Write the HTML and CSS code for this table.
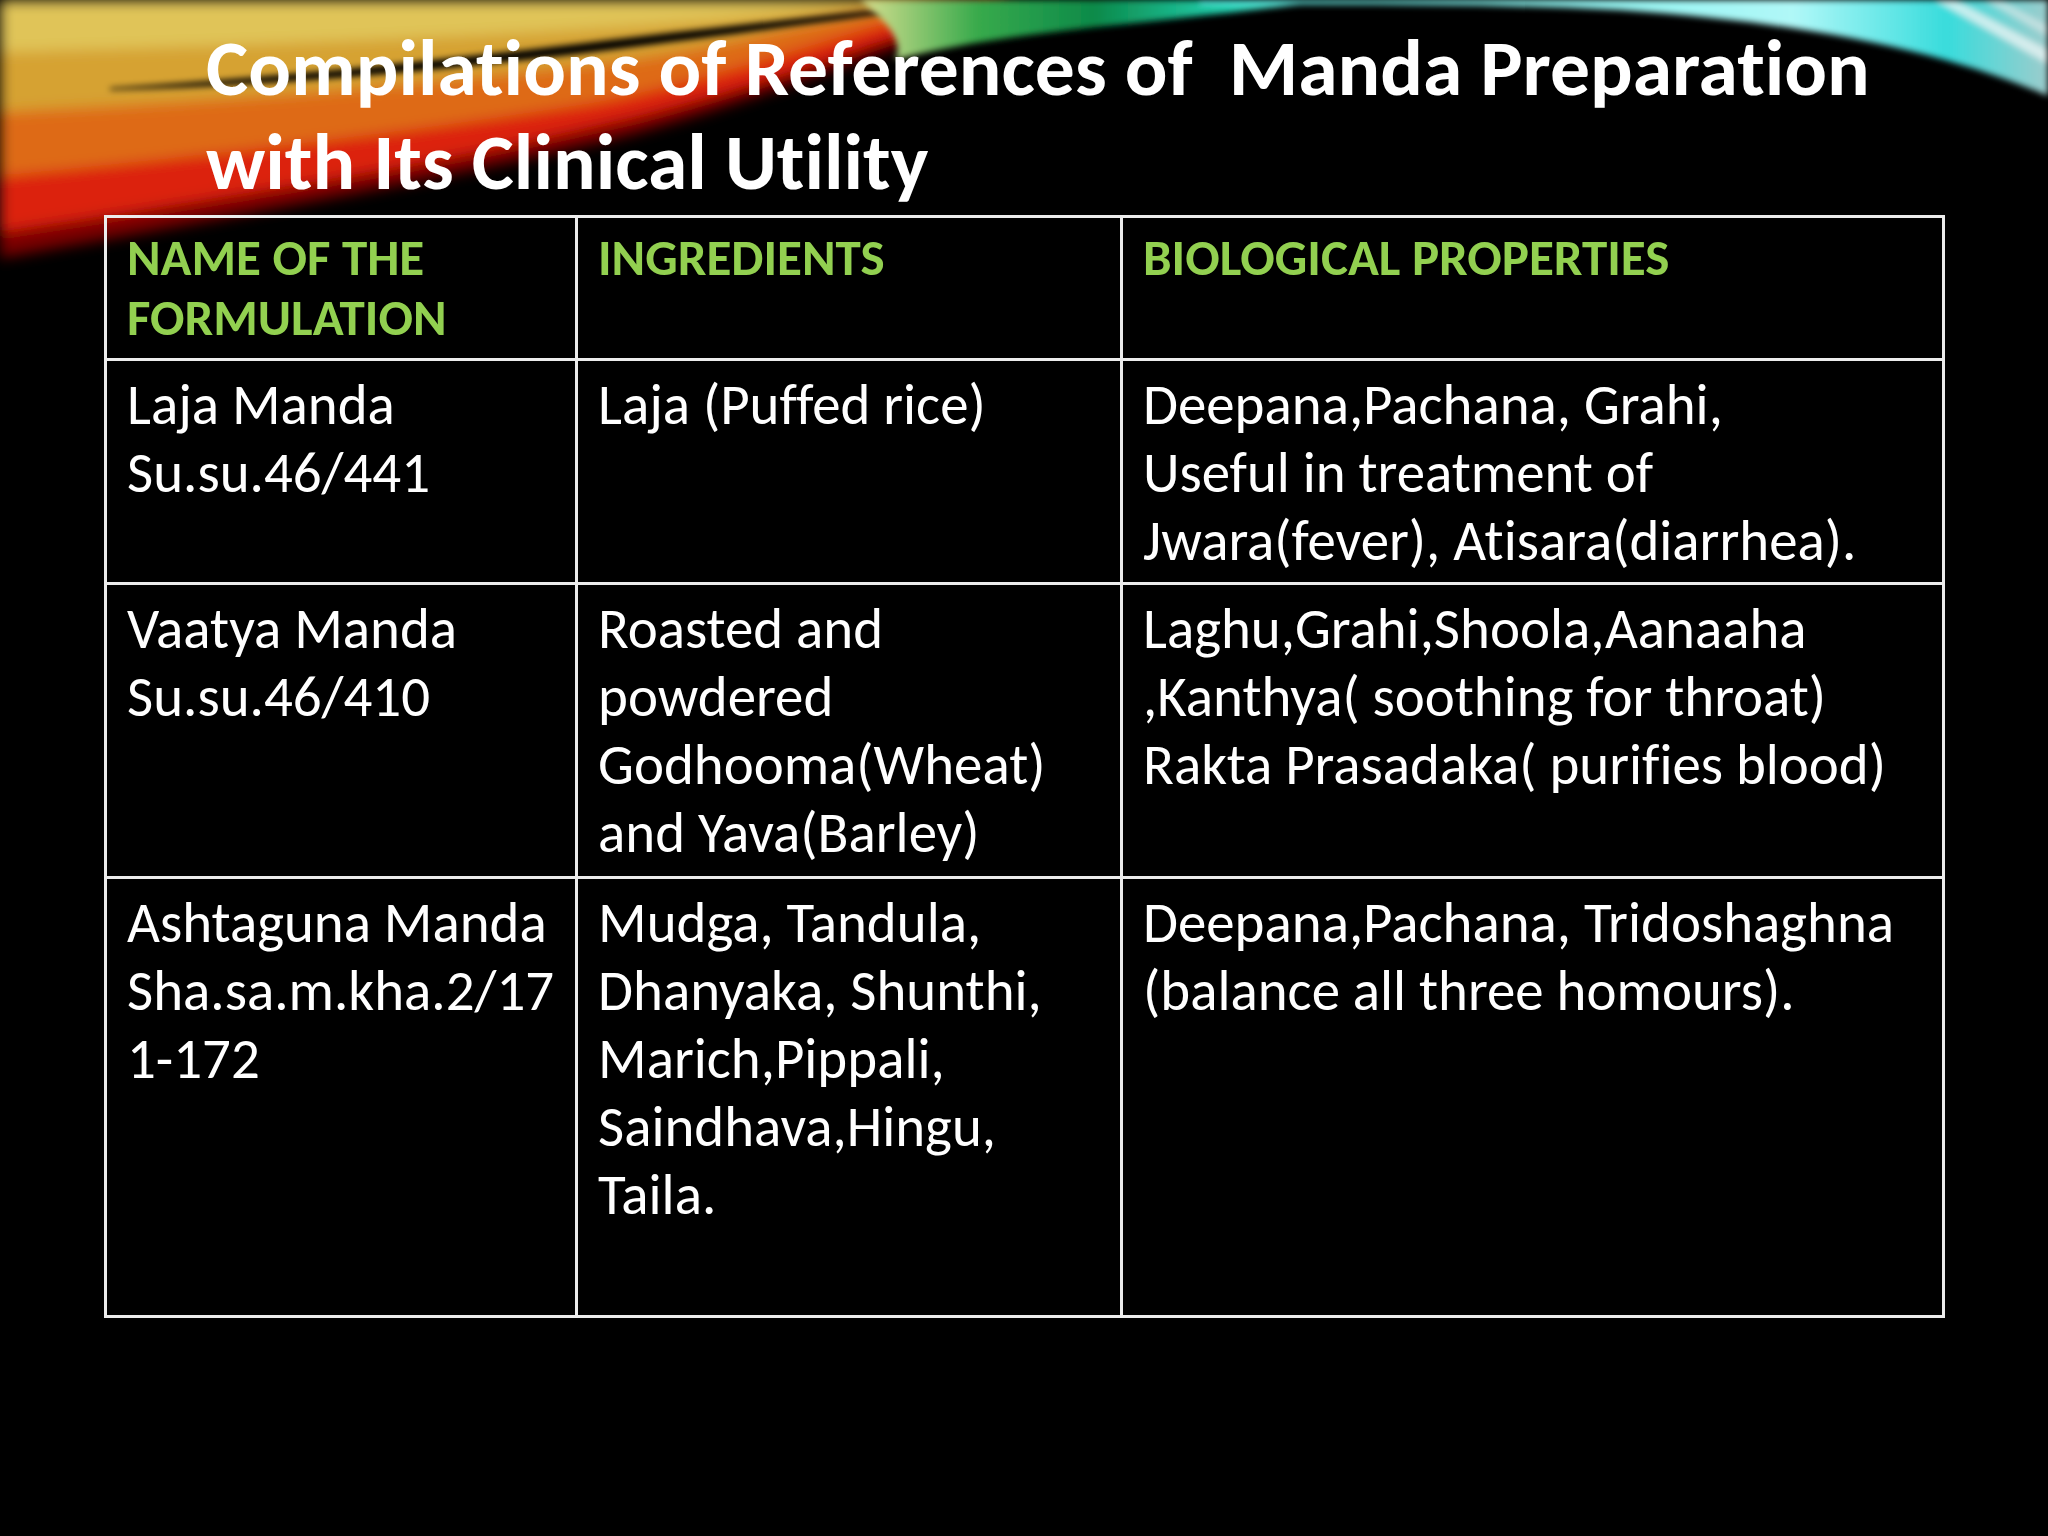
FILE: index.html
```html
<!DOCTYPE html>
<html lang="en">
<head>
<meta charset="utf-8">
<title>Manda Preparation</title>
<link rel="stylesheet" href="styles.css">
</head>
<body>
<div class="slide">
  <svg class="swoosh" viewBox="0 0 2048 320" width="2048" height="320" aria-hidden="true">
    <defs>
      <filter id="soft" x="-10%" y="-40%" width="120%" height="180%"><feGaussianBlur stdDeviation="7"/></filter>
      <filter id="soft2" x="-10%" y="-60%" width="120%" height="220%"><feGaussianBlur stdDeviation="3"/></filter>
      <linearGradient id="green" gradientUnits="userSpaceOnUse" x1="860" y1="0" x2="1330" y2="0">
        <stop offset="0" stop-color="#d8e090"/>
        <stop offset="0.25" stop-color="#38aa4c"/>
        <stop offset="0.5" stop-color="#0c8a4a"/>
        <stop offset="0.78" stop-color="#22d0b0"/>
        <stop offset="1" stop-color="#78f2ea"/>
      </linearGradient>
      <linearGradient id="cyan" gradientUnits="userSpaceOnUse" x1="1200" y1="0" x2="2048" y2="0">
        <stop offset="0" stop-color="#50e4dc"/>
        <stop offset="0.4" stop-color="#8af2ee"/>
        <stop offset="0.7" stop-color="#b0f8f8"/>
        <stop offset="0.88" stop-color="#38dcdc"/>
        <stop offset="1" stop-color="#9ccccc"/>
      </linearGradient>
    </defs>
    <g filter="url(#soft)">
      <path d="M0,0 L1020,0 C970,20 930,35 890,50 C790,85 690,120 610,140 C460,175 300,205 0,258 Z" fill="#7a0404"/>
      <path d="M0,0 L1010,0 C960,18 910,32 870,45 C770,80 670,110 600,125 C450,160 290,188 0,232 Z" fill="#dc2208"/>
      <path d="M0,0 L970,0 C910,15 870,28 830,40 C750,65 670,88 600,102 C440,128 280,148 0,176 Z" fill="#de6a14"/>
      <path d="M0,0 L930,0 C880,10 840,18 800,26 C730,42 670,55 610,62 C440,82 280,98 0,112 Z" fill="#d6a232"/>
      <path d="M0,0 L900,0 C840,8 780,14 720,20 C570,32 360,42 0,52 Z" fill="#e0c458"/>
    </g>
    <path d="M110,88 C270,78 430,62 610,40 C750,24 870,10 970,0 L985,0 C870,16 750,32 610,50 C430,72 270,86 110,90 Z" fill="#000" filter="url(#soft2)"/>
    <g filter="url(#soft2)">
      <path d="M860,0 L1330,0 C1260,10 1160,20 1070,30 C1000,38 940,48 895,60 C905,40 885,20 860,0 Z" fill="url(#green)"/>
      <path d="M1200,0 L2048,0 L2048,96 C1960,58 1830,24 1620,10 C1460,2 1320,5 1200,4 Z" fill="url(#cyan)"/>
      <path d="M1935,0 L1955,0 L2048,50 L2048,64 Z" fill="#e8f4f4" opacity="0.8"/>
      <path d="M1985,0 L2000,0 L2048,26 L2048,36 Z" fill="#d8e8e8" opacity="0.7"/>
    </g>
  </svg>

  <h1 class="title">Compilations of References of&nbsp; Manda Preparation<br>with Its Clinical Utility</h1>

  <table class="grid">
    <colgroup>
      <col class="col-name">
      <col class="col-ingr">
      <col class="col-prop">
    </colgroup>
    <tr class="row-head">
      <th>NAME OF THE<br>FORMULATION</th>
      <th>INGREDIENTS</th>
      <th>BIOLOGICAL PROPERTIES</th>
    </tr>
    <tr class="row-1">
      <td>Laja Manda<br>Su.su.46/441</td>
      <td>Laja (Puffed rice)</td>
      <td>Deepana,Pachana, Grahi,<br>Useful in treatment of<br>Jwara(fever), Atisara(diarrhea).</td>
    </tr>
    <tr class="row-2">
      <td>Vaatya Manda<br>Su.su.46/410</td>
      <td>Roasted and<br>powdered<br>Godhooma(Wheat)<br>and Yava(Barley)</td>
      <td>Laghu,Grahi,Shoola,Aanaaha<br>,Kanthya( soothing for throat)<br>Rakta Prasadaka( purifies blood)</td>
    </tr>
    <tr class="row-3">
      <td>Ashtaguna Manda<br>Sha.sa.m.kha.2/17<br>1-172</td>
      <td>Mudga, Tandula,<br>Dhanyaka, Shunthi,<br>Marich,Pippali,<br>Saindhava,Hingu,<br>Taila.</td>
      <td>Deepana,Pachana, Tridoshaghna<br>(balance all three homours).</td>
    </tr>
  </table>
</div>
</body>
</html>
```

FILE: styles.css
```css
html, body {
  margin: 0;
  padding: 0;
  background: #000;
}

.slide {
  position: relative;
  width: 2048px;
  height: 1536px;
  overflow: hidden;
  background: #000;
  font-family: "Carlito", "Lato", sans-serif;
  font-variant-ligatures: none;
  color: #fff;
  display: flex;
  flex-direction: column;
}

.swoosh {
  position: absolute;
  left: 0;
  top: 0;
  z-index: 0;
}

.title {
  position: relative;
  z-index: 1;
  margin: 0;
  padding: 21px 0 0 206px;
  font-size: 79.6px;
  line-height: 94px;
  font-weight: 700;
  color: #fff;
  white-space: nowrap;
}

.grid {
  position: relative;
  z-index: 1;
  margin: 6px 0 0 104px;
  width: 1838px;
  border-collapse: collapse;
  table-layout: fixed;
}

.col-name { width: 471px; }
.col-ingr { width: 545px; }
.col-prop { width: 822px; }

.grid th,
.grid td {
  border: 3px solid #ececec;
  vertical-align: top;
  text-align: left;
  padding: 10px 20px 0 20px;
  white-space: nowrap;
}

.grid th {
  color: #92d050;
  font-weight: 700;
  font-size: 51px;
  line-height: 60px;
}

.grid td {
  font-size: 56.9px;
  line-height: 68px;
  font-weight: 400;
}

.row-head { height: 143px; }
.row-1 { height: 224px; }
.row-2 { height: 294px; }
.row-3 { height: 439px; }
```
